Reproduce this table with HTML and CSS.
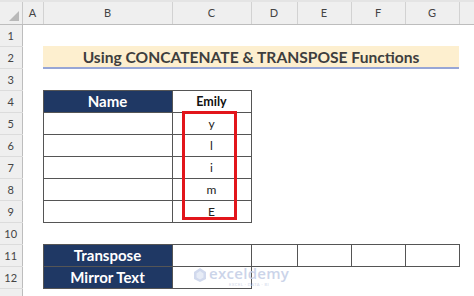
FILE: index.html
```html
<!DOCTYPE html>
<html>
<head>
<meta charset="utf-8">
<link rel="stylesheet" href="styles.css">
</head>
<body>
<div class="sheet">
  <div class="topstrip"></div>
  <table class="grid">
    <colgroup>
      <col class="c-rh"><col class="c-a"><col class="c-b"><col class="c-c"><col class="c-d"><col class="c-e"><col class="c-f"><col class="c-g"><col class="c-h">
    </colgroup>
    <tr class="hdr">
      <td class="corner"><svg class="tri" width="10" height="10" viewBox="0 0 10 10"><polygon points="10,0 10,10 0,10" fill="#b9b9b9"/></svg></td>
      <td class="ch">A</td><td class="ch">B</td><td class="ch">C</td><td class="ch">D</td><td class="ch">E</td><td class="ch">F</td><td class="ch">G</td><td class="ch last"></td>
    </tr>
    <tr><td class="rh">1</td><td></td><td></td><td></td><td></td><td></td><td></td><td></td><td></td></tr>
    <tr><td class="rh">2</td><td></td><td class="title" colspan="6">Using CONCATENATE &amp; TRANSPOSE Functions</td><td></td></tr>
    <tr><td class="rh">3</td><td></td><td></td><td></td><td></td><td></td><td></td><td></td><td></td></tr>
    <tr><td class="rh">4</td><td></td><td class="navy b">Name</td><td class="cell b emily">Emily</td><td></td><td></td><td></td><td></td><td></td></tr>
    <tr><td class="rh">5</td><td></td><td class="cell"></td><td class="cell v">y</td><td></td><td></td><td></td><td></td><td></td></tr>
    <tr><td class="rh">6</td><td></td><td class="cell"></td><td class="cell v">l</td><td></td><td></td><td></td><td></td><td></td></tr>
    <tr><td class="rh">7</td><td></td><td class="cell"></td><td class="cell v">i</td><td></td><td></td><td></td><td></td><td></td></tr>
    <tr><td class="rh">8</td><td></td><td class="cell"></td><td class="cell v">m</td><td></td><td></td><td></td><td></td><td></td></tr>
    <tr><td class="rh">9</td><td></td><td class="cell"></td><td class="cell v">E</td><td></td><td></td><td></td><td></td><td></td></tr>
    <tr><td class="rh">10</td><td></td><td></td><td></td><td></td><td></td><td></td><td></td><td></td></tr>
    <tr><td class="rh">11</td><td></td><td class="navy b">Transpose</td><td class="cell"></td><td class="cell"></td><td class="cell"></td><td class="cell"></td><td class="cell"></td><td></td></tr>
    <tr><td class="rh">12</td><td></td><td class="navy b">Mirror Text</td><td class="cell"></td><td></td><td></td><td></td><td></td><td></td></tr>
    <tr class="partial"><td class="rh"></td><td></td><td></td><td></td><td></td><td></td><td></td><td></td><td></td></tr>
  </table>
  <div class="highlight"></div>
  <div class="watermark">
    <svg class="wm-logo" width="14" height="16" viewBox="0 0 14 16"><path d="M7 1 L13 5 L13 12 L7 15 L1 12 L1 5 Z" fill="#c9d3ea"/><path d="M7 4 L10.5 6.5 L10.5 10.5 L7 12.5 L3.5 10.5 L3.5 6.5 Z" fill="#e3e9f5"/></svg>
    <div class="wm-text">
      <span class="wm-name">exceldemy</span>
      <span class="wm-sub">EXCEL · DATA · BI</span>
    </div>
  </div>
</div>
</body>
</html>
```
FILE: styles.css
```css
html, body {
  margin: 0;
  padding: 0;
  background: #ffffff;
}
body {
  width: 474px;
  height: 296px;
  overflow: hidden;
  font-family: Lato, "Liberation Sans", sans-serif;
}
.sheet {
  position: relative;
  width: 474px;
  height: 296px;
  overflow: hidden;
}
.topstrip {
  height: 2px;
  background: #e4e4e4;
}
.grid {
  border-collapse: collapse;
  table-layout: fixed;
  width: 490px;
}
.c-rh { width: 22px; }
.c-a { width: 21px; }
.c-b { width: 129px; }
.c-c { width: 79px; }
.c-d { width: 46px; }
.c-e { width: 54px; }
.c-f { width: 54px; }
.c-g { width: 54px; }
.c-h { width: 31px; }
.grid tr {
  height: 22px;
}
.grid td {
  padding: 0;
  height: 22px;
  box-sizing: border-box;
  text-align: center;
  vertical-align: middle;
  white-space: nowrap;
  overflow: hidden;
}
.hdr td {
  background: #efefef;
  border-bottom: 1px solid #bdbdbd;
}
.corner {
  border-right: 1px solid #c9c9c9;
  position: relative;
}
.tri {
  position: absolute;
  right: 3px;
  bottom: 3px;
}
.ch {
  font-size: 11px;
  color: #444;
  border-right: 1px solid #d2d2d2;
  padding-top: 1px;
}
.rh {
  background: #efefef;
  font-size: 11px;
  color: #444;
  border-right: 1px solid #bdbdbd;
  border-bottom: 1px solid #dcdcdc;
}
.title {
  background: #fdefcf;
  border-bottom: 2px solid #97a6d6;
  color: #3e3e3e;
  font-weight: bold;
  font-size: 15.6px;
  letter-spacing: 0;
}
.cell {
  border: 1px solid #555;
}
.b {
  font-weight: bold;
}
.navy {
  background: #1f3864;
  color: #ffffff;
  font-size: 15px;
  border: 1px solid #555;
}
.emily {
  font-size: 12.5px;
  color: #111;
}
.v {
  font-size: 12px;
  color: #222;
}
.highlight {
  position: absolute;
  left: 182px;
  top: 111px;
  width: 55px;
  height: 109px;
  box-sizing: border-box;
  border: 3px solid #e2151b;
}
.watermark {
  position: absolute;
  left: 193px;
  top: 266px;
  display: flex;
  align-items: flex-start;
  gap: 2px;
  opacity: 0.85;
}
.wm-logo {
  margin-top: 1px;
}
.wm-text {
  display: flex;
  flex-direction: column;
  align-items: center;
  line-height: 1;
}
.wm-name {
  font-family: "Open Sans", sans-serif;
  font-size: 15px;
  line-height: 15px;
  font-weight: 600;
  color: #c3cde6;
  letter-spacing: 0.3px;
}
.wm-sub {
  font-size: 4px;
  line-height: 5px;
  color: #c9d1e6;
  letter-spacing: 0.5px;
  margin-top: 1px;
}
```
